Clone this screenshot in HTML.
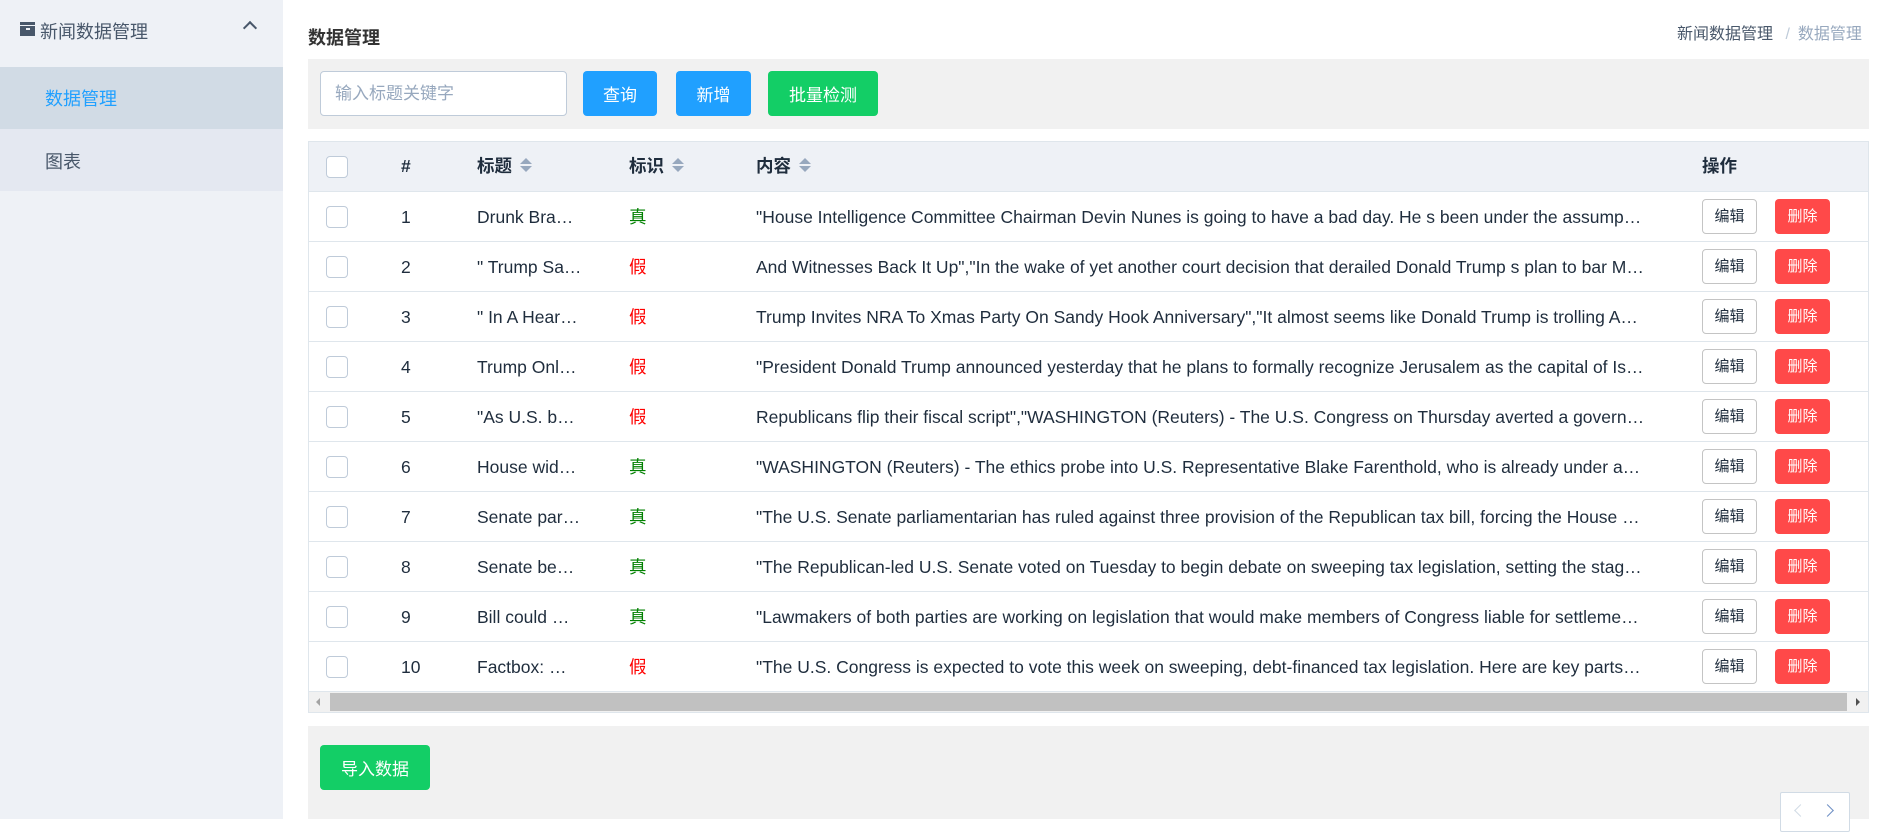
<!DOCTYPE html>
<html><head><meta charset="utf-8"><style>
*{margin:0;padding:0;box-sizing:border-box}
body{width:1878px;height:819px;overflow:hidden;background:#fff;font-family:"Liberation Sans","Noto Sans CJK SC",sans-serif;color:#1f2d3d;position:relative}
.a{position:absolute}
.side{left:0;top:0;width:283px;height:819px;background:#eef1f6}
.btn{position:absolute;border-radius:4px;color:#fff;font-size:17px;display:flex;align-items:center;justify-content:center}
.row{position:absolute;left:308px;width:1561px;height:50px;border-bottom:1px solid #dfe6ec;font-size:17.5px;background:#fff}
.row>.t{position:absolute;top:0;height:50px;line-height:50px;white-space:nowrap}
.row>.cb{position:absolute;left:18px;top:14px;width:22px;height:22px;border:1px solid #bfcbd9;border-radius:4px;background:#fff}
.row>.ed{position:absolute;left:1394px;top:7px;width:55px;height:35px;border:1px solid #c4c4c4;border-radius:4px;font-size:15px;line-height:33px;text-align:center;color:#1f2d3d;background:#fff}
.row>.de{position:absolute;left:1467px;top:7px;width:55px;height:35px;border-radius:4px;font-size:15px;line-height:35px;text-align:center;color:#fff;background:#ff4949}
.sort{display:inline-block;vertical-align:middle;margin-left:8px;width:0;position:relative;top:-2px}
.sort:before{content:"";position:absolute;left:0;top:-7px;border:6px solid transparent;border-bottom:6px solid #97a8be;border-top:0}
.sort:after{content:"";position:absolute;left:0;top:1px;border:6px solid transparent;border-top:6px solid #97a8be;border-bottom:0}
</style></head><body>
<div class="a side"></div>
<div class="a" style="left:20px;top:22px;width:15px;height:14px;background:#48576a"></div>
<div class="a" style="left:20px;top:25px;width:15px;height:1px;background:#eef1f6"></div>
<div class="a" style="left:26px;top:28px;width:4px;height:2px;background:#eef1f6"></div>
<div class="a" style="left:40px;top:18px;font-size:18px;color:#48576a">新闻数据管理</div>
<div class="a" style="left:245px;top:23px;width:10px;height:10px;border-left:2px solid #48576a;border-top:2px solid #48576a;transform:rotate(45deg)"></div>
<div class="a" style="left:0;top:67px;width:283px;height:62px;background:#d1dbe5"></div>
<div class="a" style="left:45px;top:85px;font-size:18px;color:#20a0ff">数据管理</div>
<div class="a" style="left:0;top:129px;width:283px;height:62px;background:#e4e8f1"></div>
<div class="a" style="left:45px;top:148px;font-size:18px;color:#48576a">图表</div>

<div class="a" style="left:308px;top:24px;font-size:18px;font-weight:bold;color:#333">数据管理</div>
<div class="a" style="left:1677px;top:20px;font-size:16px;color:#48576a">新闻数据管理 <span style="color:#bfcbd9;margin:0 8px">/</span><span style="color:#97a8be">数据管理</span></div>

<div class="a" style="left:308px;top:59px;width:1561px;height:70px;background:#f1f1f1"></div>
<div class="a" style="left:320px;top:71px;width:247px;height:45px;background:#fff;border:1px solid #bfcbd9;border-radius:4px;font-size:17px;color:#97a8be;line-height:43px;padding-left:14px">输入标题关键字</div>
<div class="btn" style="left:583px;top:71px;width:74px;height:45px;background:#20a0ff">查询</div>
<div class="btn" style="left:676px;top:71px;width:75px;height:45px;background:#20a0ff">新增</div>
<div class="btn" style="left:768px;top:71px;width:110px;height:45px;background:#13ce66">批量检测</div>

<div class="row" style="top:141px;height:51px;background:#eef1f6;font-weight:bold;border-top:1px solid #dfe6ec">
<div class="cb"></div>
<div class="t" style="left:93px;line-height:49px">#</div>
<div class="t" style="left:169px;line-height:49px">标题<span class="sort"></span></div>
<div class="t" style="left:321px;line-height:49px">标识<span class="sort"></span></div>
<div class="t" style="left:448px;line-height:49px">内容<span class="sort"></span></div>
<div class="t" style="left:1394px;line-height:49px">操作</div>
</div>

<div class="row" style="top:192px"><div class="cb"></div><div class="t" style="left:93px">1</div><div class="t" style="left:169px">Drunk Bra…</div><div class="t" style="left:321px;color:#008000">真</div><div class="t" style="left:448px">"House Intelligence Committee Chairman Devin Nunes is going to have a bad day. He s been under the assump…</div><div class="ed">编辑</div><div class="de">删除</div></div>
<div class="row" style="top:242px"><div class="cb"></div><div class="t" style="left:93px">2</div><div class="t" style="left:169px">" Trump Sa…</div><div class="t" style="left:321px;color:#ff0000">假</div><div class="t" style="left:448px">And Witnesses Back It Up","In the wake of yet another court decision that derailed Donald Trump s plan to bar M…</div><div class="ed">编辑</div><div class="de">删除</div></div>
<div class="row" style="top:292px"><div class="cb"></div><div class="t" style="left:93px">3</div><div class="t" style="left:169px">" In A Hear…</div><div class="t" style="left:321px;color:#ff0000">假</div><div class="t" style="left:448px">Trump Invites NRA To Xmas Party On Sandy Hook Anniversary","It almost seems like Donald Trump is trolling A…</div><div class="ed">编辑</div><div class="de">删除</div></div>
<div class="row" style="top:342px"><div class="cb"></div><div class="t" style="left:93px">4</div><div class="t" style="left:169px">Trump Onl…</div><div class="t" style="left:321px;color:#ff0000">假</div><div class="t" style="left:448px">"President Donald Trump announced yesterday that he plans to formally recognize Jerusalem as the capital of Is…</div><div class="ed">编辑</div><div class="de">删除</div></div>
<div class="row" style="top:392px"><div class="cb"></div><div class="t" style="left:93px">5</div><div class="t" style="left:169px">"As U.S. b…</div><div class="t" style="left:321px;color:#ff0000">假</div><div class="t" style="left:448px">Republicans flip their fiscal script","WASHINGTON (Reuters) - The U.S. Congress on Thursday averted a govern…</div><div class="ed">编辑</div><div class="de">删除</div></div>
<div class="row" style="top:442px"><div class="cb"></div><div class="t" style="left:93px">6</div><div class="t" style="left:169px">House wid…</div><div class="t" style="left:321px;color:#008000">真</div><div class="t" style="left:448px">"WASHINGTON (Reuters) - The ethics probe into U.S. Representative Blake Farenthold, who is already under a…</div><div class="ed">编辑</div><div class="de">删除</div></div>
<div class="row" style="top:492px"><div class="cb"></div><div class="t" style="left:93px">7</div><div class="t" style="left:169px">Senate par…</div><div class="t" style="left:321px;color:#008000">真</div><div class="t" style="left:448px">"The U.S. Senate parliamentarian has ruled against three provision of the Republican tax bill, forcing the House …</div><div class="ed">编辑</div><div class="de">删除</div></div>
<div class="row" style="top:542px"><div class="cb"></div><div class="t" style="left:93px">8</div><div class="t" style="left:169px">Senate be…</div><div class="t" style="left:321px;color:#008000">真</div><div class="t" style="left:448px">"The Republican-led U.S. Senate voted on Tuesday to begin debate on sweeping tax legislation, setting the stag…</div><div class="ed">编辑</div><div class="de">删除</div></div>
<div class="row" style="top:592px"><div class="cb"></div><div class="t" style="left:93px">9</div><div class="t" style="left:169px">Bill could …</div><div class="t" style="left:321px;color:#008000">真</div><div class="t" style="left:448px">"Lawmakers of both parties are working on legislation that would make members of Congress liable for settleme…</div><div class="ed">编辑</div><div class="de">删除</div></div>
<div class="row" style="top:642px"><div class="cb"></div><div class="t" style="left:93px">10</div><div class="t" style="left:169px">Factbox: …</div><div class="t" style="left:321px;color:#ff0000">假</div><div class="t" style="left:448px">"The U.S. Congress is expected to vote this week on sweeping, debt-financed tax legislation. Here are key parts…</div><div class="ed">编辑</div><div class="de">删除</div></div>

<div class="a" style="left:308px;top:141px;width:1561px;height:572px;border:1px solid #dfe6ec"></div>
<div class="a" style="left:309px;top:692px;width:1559px;height:20px;background:#f1f1f1"></div>
<div class="a" style="left:330px;top:693px;width:1517px;height:18px;background:#c1c1c1"></div>
<div class="a" style="left:316px;top:698px;border:4px solid transparent;border-right:4px solid #a3a3a3;border-left:0"></div>
<div class="a" style="left:1856px;top:698px;border:4px solid transparent;border-left:4px solid #505050;border-right:0"></div>

<div class="a" style="left:308px;top:726px;width:1561px;height:93px;background:#f1f1f1"></div>
<div class="btn" style="left:320px;top:745px;width:110px;height:45px;background:#13ce66">导入数据</div>
<div class="a" style="left:1780px;top:792px;width:70px;height:40px;background:#fff;border:1px solid #d1dbe5;border-radius:2px"></div>
<div class="a" style="left:1796px;top:806px;width:9px;height:9px;border-left:1.5px solid #d1dbe5;border-bottom:1.5px solid #d1dbe5;transform:rotate(45deg)"></div>
<div class="a" style="left:1823px;top:806px;width:9px;height:9px;border-right:1.5px solid #6d8fc4;border-top:1.5px solid #6d8fc4;transform:rotate(45deg)"></div>
</body></html>
